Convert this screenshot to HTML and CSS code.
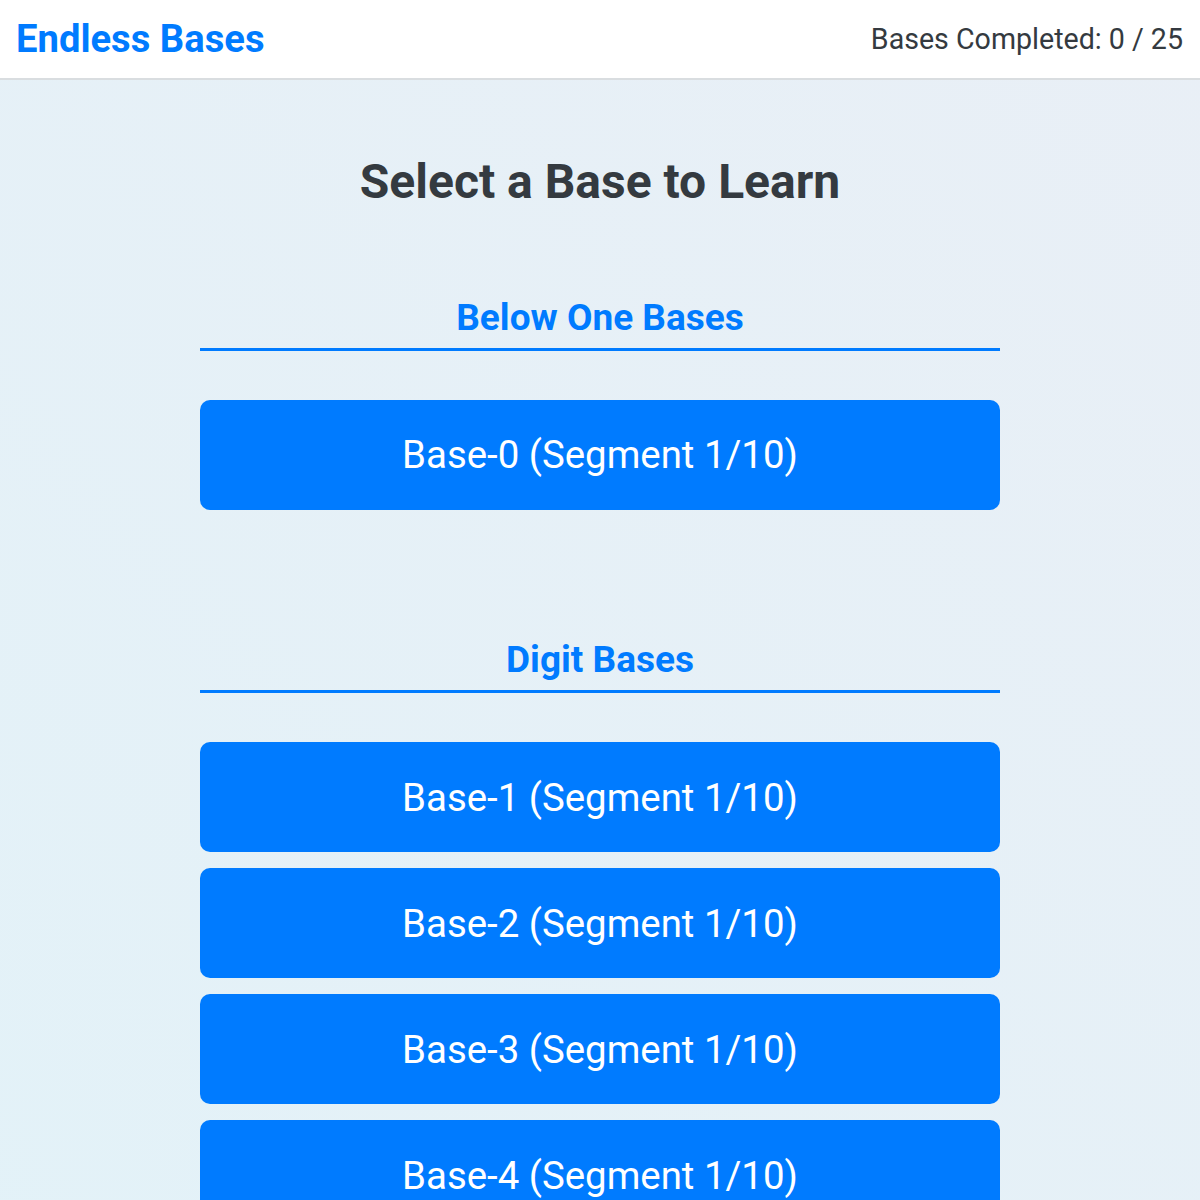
FILE: index.html
```html
<!DOCTYPE html>
<html lang="en">
<head>
  <meta charset="UTF-8">
  <meta name="viewport" content="width=device-width, initial-scale=1.0">
  <title>Endless Bases</title>
  <link rel="stylesheet" href="styles.css">
</head>
<body>
  <header class="topbar">
    <div class="brand">Endless Bases</div>
    <div class="progress">Bases Completed: 0 / 25</div>
  </header>
  <main class="container">
    <h1>Select a Base to Learn</h1>
    <section class="group">
      <h2>Below One Bases</h2>
      <div class="base-list">
        <button class="base-btn">Base-0 (Segment 1/10)</button>
      </div>
    </section>
    <section class="group">
      <h2>Digit Bases</h2>
      <div class="base-list">
        <button class="base-btn">Base-1 (Segment 1/10)</button>
        <button class="base-btn">Base-2 (Segment 1/10)</button>
        <button class="base-btn">Base-3 (Segment 1/10)</button>
        <button class="base-btn">Base-4 (Segment 1/10)</button>
        <button class="base-btn">Base-5 (Segment 1/10)</button>
      </div>
    </section>
  </main>
</body>
</html>
```

FILE: styles.css
```css
body { font-family: Roboto, "Liberation Sans", sans-serif; margin: 0; padding: 0; min-height: 100vh; background: linear-gradient(225deg, #e9eff6 0%, #e2f2f8 100%); color: #343a40; }
.topbar { display: flex; justify-content: space-between; align-items: center; box-sizing: border-box; height: 80px; padding: 0 17px 0 16px; background: #fff; border-bottom: 2px solid #d9dde0; }
.brand { font-size: 38.2px; font-weight: bold; color: #007bff; }
.progress { font-size: 28.6px; color: #343a40; }
.container { width: 800px; margin: 0 auto; padding-top: 73px; }
h1 { font-size: 48px; font-weight: bold; text-align: center; margin: 0 0 85px; line-height: 1.2; }
.group { margin-bottom: 128px; }
h2 { font-size: 37px; font-weight: bold; color: #007bff; text-align: center; margin: 0 0 49px; padding-bottom: 8px; border-bottom: 3px solid #007bff; line-height: 1.2; }
.base-list { display: flex; flex-direction: column; gap: 16px; }
.base-btn { height: 110px; border: none; border-radius: 10px; background: #007bff; color: #fff; font-family: inherit; font-size: 38.4px; cursor: pointer; }
```
